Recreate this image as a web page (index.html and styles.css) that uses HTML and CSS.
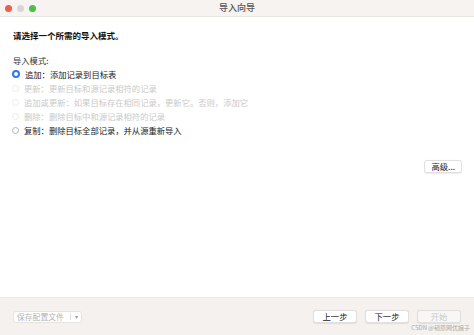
FILE: index.html
```html
<!DOCTYPE html>
<html lang="zh-cn">
<head>
  <meta charset="UTF-8">
  <title>导入向导</title>
  <link rel="stylesheet" href="styles.css">
</head>
<body>
<div class="win">
  <header class="titlebar">
    <div class="lights">
      <span class="light light-red"></span>
      <span class="light light-grey"></span>
      <span class="light light-green"></span>
    </div>
    <h1 class="titlebar-h">导入向导</h1>
  </header>
  <main class="main">
    <h2 class="main-h">请选择一个所需的导入模式。</h2>
    <p class="label">导入模式:</p>
    <ul class="modes">
      <li class="mode"><span class="radio checked"></span>追加：添加记录到目标表</li>
      <li class="mode disabled"><span class="radio"></span>更新：更新目标和源记录相符的记录</li>
      <li class="mode disabled"><span class="radio"></span>追加或更新：如果目标存在相同记录，更新它。否则，添加它</li>
      <li class="mode disabled"><span class="radio"></span>删除：删除目标中和源记录相符的记录</li>
      <li class="mode"><span class="radio"></span>复制：删除目标全部记录，并从源重新导入</li>
    </ul>
    <div class="adv">
      <button class="btn">高级...</button>
    </div>
  </main>
  <footer class="footer">
    <div class="select">
      <span class="select-txt">保存配置文件</span>
      <span class="select-sep"></span>
      <span class="select-arrow">▾</span>
    </div>
    <div class="nav">
      <button class="btn btn-nav">上一步</button>
      <button class="btn btn-nav">下一步</button>
      <button class="btn btn-nav" disabled>开始</button>
    </div>
    <span class="mark">CSDN @韧原网优娘子</span>
  </footer>
</div>
</body>
</html>
```

FILE: styles.css
```css
body {
  margin: 0;
  font-family: "Noto Sans CJK SC", "Liberation Sans", sans-serif;
  color: #222;
}
.win {
  width: 474px;
  height: 335px;
  display: flex;
  flex-direction: column;
  background: #fff;
}
.titlebar {
  height: 17px;
  flex: none;
  background: #f6f3f0;
  border-bottom: 1px solid #e8e5e2;
  box-sizing: border-box;
  display: flex;
  align-items: center;
  position: relative;
}
.lights {
  display: flex;
  gap: 5px;
  padding-left: 5px;
}
.light {
  width: 7px;
  height: 7px;
  border-radius: 50%;
}
.light-red { background: #ee5b55; }
.light-grey { background: #d8d6d4; }
.light-green { background: #4cbf46; }
.titlebar-h {
  position: absolute;
  left: 0; right: 0; top: 0;
  margin: 0;
  line-height: 16px;
  text-align: center;
  font-size: 9px;
  font-weight: 500;
  color: #555;
}
.main {
  flex-grow: 1;
  padding: 12px 12px 0 13px;
}
.main-h {
  margin: 0;
  font-size: 8.5px;
  line-height: 12px;
  font-weight: bold;
  color: #111;
}
.label {
  margin: 13px 0 0;
  font-size: 8.3px;
  line-height: 12px;
  color: #333;
}
.modes {
  list-style: none;
  margin: 1px 0 0;
  padding: 0;
}
.mode {
  display: flex;
  align-items: center;
  height: 14px;
  font-size: 8.3px;
  color: #222;
}
.mode.disabled {
  color: #c9c9c9;
}
.radio {
  width: 7px;
  height: 7px;
  border: 1px solid #b5b5b5;
  border-radius: 50%;
  box-sizing: border-box;
  margin: 0 5px 0 -1px;
  background: #fff;
}
.mode.disabled .radio {
  border-color: #ececec;
}
.radio.checked {
  border: 2px solid #2f78f0;
  background: #fff;
  width: 8px;
  height: 8px;
}
.adv {
  display: flex;
  justify-content: flex-end;
  margin-top: 23px;
}
.btn {
  height: 13px;
  padding: 0 6px;
  font-family: inherit;
  font-size: 8.3px;
  line-height: 11px;
  color: #222;
  background: #fff;
  border: 1px solid #e2e0de;
  border-radius: 3px;
  box-shadow: 0 0.5px 1px rgba(0, 0, 0, .08);
}
.footer {
  height: 38px;
  flex: none;
  background: #f4f1ee;
  border-top: 1px solid #ece9e6;
  box-sizing: border-box;
  display: flex;
  align-items: center;
  justify-content: space-between;
  padding: 0 13px 0 13px;
  position: relative;
}
.select {
  width: 69px;
  height: 12px;
  display: flex;
  align-items: center;
  background: #fff;
  border: 1px solid #e6e3e0;
  border-radius: 3px;
  box-sizing: border-box;
  padding: 0 3px;
  font-size: 7.8px;
  color: #b4b4b4;
}
.select-txt {
  flex-grow: 1;
}
.select-sep {
  width: 1px;
  height: 7px;
  background: #ddd;
  margin-right: 4px;
}
.select-arrow {
  font-size: 6px;
  color: #999;
}
.nav {
  display: flex;
  gap: 8px;
}
.btn-nav {
  width: 44px;
  padding: 0;
}
.btn-nav:disabled {
  color: #c8c8c8;
  background: #f8f7f6;
}
.mark {
  position: absolute;
  right: 4px;
  bottom: 3px;
  font-size: 6px;
  color: #aaa;
}
```
